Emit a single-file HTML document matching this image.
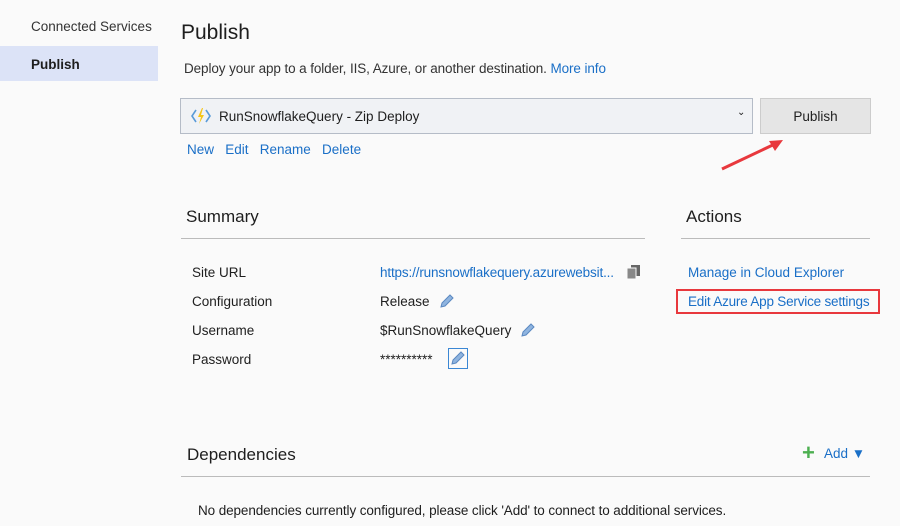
<!DOCTYPE html><html><head><style>
body{margin:0;width:900px;height:526px;background:#fafafa;font-family:"Liberation Sans",sans-serif;color:#1e1e1e;position:relative;overflow:hidden}
.a{position:absolute;white-space:nowrap}
.l{color:#1a6fc7}
.f{font-size:13.5px}
</style></head><body>
<div class="a" style="left:0;top:46px;width:158px;height:35px;background:#dce3f7"></div>
<div class="a f" style="left:31px;top:19px;color:#333">Connected Services</div>
<div class="a f" style="left:31px;top:57px;font-weight:bold">Publish</div>
<div class="a" style="left:181px;top:21px;font-size:21px">Publish</div>
<div class="a f" style="left:184px;top:61px;color:#333;letter-spacing:-0.1px">Deploy your app to a folder, IIS, Azure, or another destination. <span class="l">More info</span></div>
<div class="a" style="left:180px;top:98px;width:571px;height:34px;border:1px solid #b5bcc7;background:#f0f2f5"></div>
<svg class="a" style="left:190px;top:106px" width="22" height="20" viewBox="0 0 22 20"><path d="M6 4L2 10l4 6M16 4l4 6-4 6" stroke="#5a9bd8" stroke-width="1.6" fill="none"/><path d="M12 2L8 11h3l-2 7 5-9h-3l2-7z" fill="#f5c518"/></svg>
<div class="a f" style="left:219px;top:109px">RunSnowflakeQuery - Zip Deploy</div>
<div class="a" style="left:737px;top:107px;font-size:10px">&#8964;</div>
<div class="a f" style="left:760px;top:98px;width:109px;height:34px;border:1px solid #ccc;background:#e5e5e5;text-align:center;line-height:35px">Publish</div>
<div class="a f l" style="left:187px;top:142px">New&nbsp;&nbsp; Edit&nbsp;&nbsp; Rename&nbsp;&nbsp; Delete</div>
<svg class="a" style="left:715px;top:135px" width="75" height="40"><line x1="7" y1="34" x2="62" y2="8" stroke="#e8383d" stroke-width="3"/><path d="M68 5L54 6l6 10z" fill="#e8383d"/></svg>
<div class="a" style="left:186px;top:207px;font-size:17px">Summary</div>
<div class="a" style="left:181px;top:238px;width:464px;height:1px;background:#bbb"></div>
<div class="a" style="left:686px;top:207px;font-size:17px">Actions</div>
<div class="a" style="left:681px;top:238px;width:189px;height:1px;background:#bbb"></div>
<div class="a f" style="left:192px;top:265px">Site URL</div>
<div class="a f" style="left:192px;top:294px">Configuration</div>
<div class="a f" style="left:192px;top:323px">Username</div>
<div class="a f" style="left:192px;top:352px">Password</div>
<div class="a f l" style="left:380px;top:265px;letter-spacing:-0.15px">https://runsnowflakequery.azurewebsit...</div>
<svg class="a" style="left:626px;top:264px" width="16" height="16"><rect x="5" y="1" width="9" height="11" fill="#666"/><rect x="1" y="4" width="9" height="11" fill="#888" stroke="#fafafa"/></svg>
<div class="a f" style="left:380px;top:294px">Release</div>
<div class="a f" style="left:380px;top:323px">$RunSnowflakeQuery</div>
<div class="a f" style="left:380px;top:352px">**********</div>
<svg class="a" style="left:438px;top:292px" width="18" height="18"><path d="M3 15l1-4 8-8 3 3-8 8z" fill="#8fb4df" stroke="#5a88c0"/></svg>
<svg class="a" style="left:519px;top:321px" width="18" height="18"><path d="M3 15l1-4 8-8 3 3-8 8z" fill="#8fb4df" stroke="#5a88c0"/></svg>
<div class="a" style="left:448px;top:348px;width:18px;height:19px;border:1px solid #3b87d4"></div>
<svg class="a" style="left:449px;top:349px" width="18" height="18"><path d="M3 15l1-4 8-8 3 3-8 8z" fill="#8fb4df" stroke="#5a88c0"/></svg>
<div class="a f l" style="left:688px;top:265px">Manage in Cloud Explorer</div>
<div class="a" style="left:676px;top:289px;width:200px;height:21px;border:2px solid #e8383d"></div>
<div class="a f l" style="left:688px;top:294px;letter-spacing:-0.2px">Edit Azure App Service settings</div>
<div class="a" style="left:187px;top:445px;font-size:17px">Dependencies</div>
<div class="a" style="left:802px;top:444px;color:#4caf50;font-size:22px;font-weight:bold;line-height:18px">+</div>
<div class="a f l" style="left:824px;top:446px">Add &#9660;</div>
<div class="a" style="left:181px;top:476px;width:689px;height:1px;background:#bbb"></div>
<div class="a f" style="left:198px;top:503px;letter-spacing:-0.1px">No dependencies currently configured, please click 'Add' to connect to additional services.</div>
</body></html>
